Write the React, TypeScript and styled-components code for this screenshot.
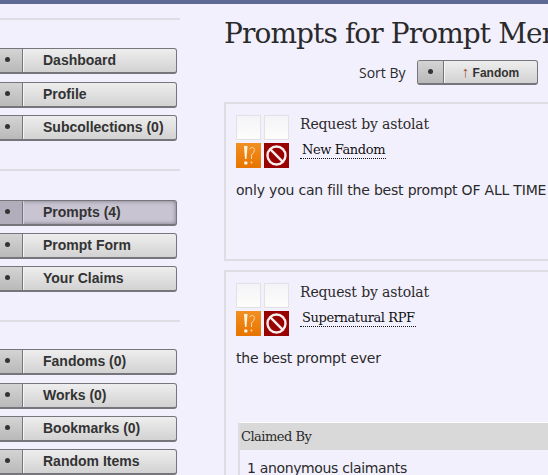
import React from "react";
import styled, { createGlobalStyle } from "styled-components";

const GlobalStyle = createGlobalStyle`
  html, body {
    margin: 0;
    padding: 0;
    height: 475px;
    overflow: hidden;
    background: #f3f0fe;
  }
`;

const navGroups = [
  { items: [{ label: "Dashboard" }, { label: "Profile" }, { label: "Subcollections (0)" }] },
  { items: [{ label: "Prompts (4)", current: true }, { label: "Prompt Form" }, { label: "Your Claims" }] },
  { items: [{ label: "Fandoms (0)" }, { label: "Works (0)" }, { label: "Bookmarks (0)" }, { label: "Random Items" }] },
];

const FlagIcon = () => (
  <svg width="25" height="25" viewBox="0 0 25 25">
    <defs>
      <linearGradient id="flag" x1="0" y1="0" x2="0" y2="1">
        <stop offset="0" stopColor="#f28f22" />
        <stop offset="1" stopColor="#e87400" />
      </linearGradient>
    </defs>
    <rect width="25" height="25" fill="url(#flag)" />
    <path d="M8 3 L11.5 3 L10.5 16 L9 16 Z" fill="#fdf3e4" />
    <circle cx="9.8" cy="20" r="1.8" fill="#fdf3e4" />
    <path d="M13.5 6 Q17 2.5 18.5 6.5 Q18.5 9.5 15.5 12 L15.5 16" fill="none" stroke="#f9d7aa" strokeWidth="1" />
    <circle cx="15.5" cy="19.5" r="1" fill="#f9d7aa" />
  </svg>
);

const BanIcon = () => (
  <svg width="25" height="25" viewBox="0 0 25 25">
    <rect width="25" height="25" fill="#990000" />
    <circle cx="12.5" cy="12.5" r="9" fill="none" stroke="#f4eeee" strokeWidth="2.4" />
    <path d="M6.2 6.2 L18.8 18.8" stroke="#f4eeee" strokeWidth="2.4" />
  </svg>
);

const App = () => {
  return (
    <Page>
      <GlobalStyle />
      <TopBar />
      <Columns>
        <Sidebar>
          {navGroups.map((group, i) => (
            <NavGroup key={i}>
              <Rule />
              <NavList>
                {group.items.map((item: any) => (
                  <NavButton key={item.label} $current={item.current}>
                    <NavDot $current={item.current}>
                      <i />
                    </NavDot>
                    <NavLabel $current={item.current}>{item.label}</NavLabel>
                  </NavButton>
                ))}
              </NavList>
            </NavGroup>
          ))}
        </Sidebar>
        <Main>
          <Title>Prompts for Prompt Meme</Title>
          <SortRow>
            <SortLabel>Sort By</SortLabel>
            <SortButton>
              <SortDot>
                <i />
              </SortDot>
              <SortText>
                <Arrow>↑</Arrow> Fandom
              </SortText>
            </SortButton>
          </SortRow>
          <Card>
            <CardHead>
              <Icons>
                <BlankIcon />
                <BlankIcon />
                <FlagIcon />
                <BanIcon />
              </Icons>
              <Heading>
                <Byline>Request by astolat</Byline>
                <Tag>New Fandom</Tag>
              </Heading>
            </CardHead>
            <Body>only you can fill the best prompt OF ALL TIME</Body>
          </Card>
          <Card>
            <CardHead>
              <Icons>
                <BlankIcon />
                <BlankIcon />
                <FlagIcon />
                <BanIcon />
              </Icons>
              <Heading>
                <Byline>Request by astolat</Byline>
                <Tag>Supernatural RPF</Tag>
              </Heading>
            </CardHead>
            <Body>the best prompt ever</Body>
            <Claims>
              <ClaimsHead>Claimed By</ClaimsHead>
              <ClaimsBody>1 anonymous claimants</ClaimsBody>
            </Claims>
          </Card>
        </Main>
      </Columns>
    </Page>
  );
};

export default App;

const Page = styled.div`
  width: 548px;
  height: 475px;
  overflow: hidden;
  background: #f3f0fe;
`;

const TopBar = styled.div`
  height: 4px;
  background: #5f6a94;
`;

const Columns = styled.div`
  display: flex;
  align-items: flex-start;
`;

const Sidebar = styled.div`
  width: 180px;
  flex: none;
  padding-top: 13.7px;
`;

const Rule = styled.div`
  height: 2px;
  background: #dfdde4;
  margin-bottom: 28.5px;
`;

const NavGroup = styled.div`
  margin-bottom: 28.2px;

  &:last-child ${Rule} {
    margin-bottom: 27px;
  }
`;

const NavList = styled.div`
  display: flex;
  flex-direction: column;
  gap: 7.33px;
`;

const NavButton = styled.div<{ $current?: boolean }>`
  display: flex;
  width: 181px;
  height: 26px;
  margin-left: -4px;
  box-sizing: border-box;
  border: 1px solid #77757c;
  border-bottom-width: 2px;
  border-radius: 3px;
  overflow: hidden;
  background: ${(p) => (p.$current ? "#c9c4d2" : "linear-gradient(#eeeeee, #d2d2d2)")};
  box-shadow: ${(p) => (p.$current ? "inset 0 0 4px #77747f" : "none")};
`;

const DotBase = styled.span`
  flex: none;
  display: flex;
  align-items: center;
  justify-content: center;
  box-sizing: border-box;
  border-right: 1px solid #77757c;

  i {
    display: block;
    width: 5px;
    height: 5px;
    border-radius: 50%;
    background: #333;
    margin-top: -2px;
  }
`;

const NavDot = styled(DotBase)<{ $current?: boolean }>`
  width: 26px;
  padding-right: 4px;
  background: ${(p) => (p.$current ? "#b2adbb" : "linear-gradient(#d4d4d4, #b9b9b9)")};
`;

const SortDot = styled(DotBase)`
  width: 26px;
  background: linear-gradient(#d4d4d4, #b9b9b9);
`;

const NavLabel = styled.span<{ $current?: boolean }>`
  padding-left: 19px;
  border-left: 1px solid ${(p) => (p.$current ? "#d8d4de" : "#f4f4f4")};
  font: bold 14px/22px "Liberation Sans", Arial, sans-serif;
  color: #333;
  white-space: nowrap;
`;

const Main = styled.div`
  margin-left: 44px;
  flex: 1;
  min-width: 0;
`;

const Title = styled.h2`
  margin: 12px 0 0;
  font: normal 28px/36px "DejaVu Serif", Georgia, serif;
  letter-spacing: -0.9px;
  color: #2a2a2a;
  white-space: nowrap;
`;

const SortRow = styled.div`
  display: flex;
  align-items: center;
  margin-top: 8px;
  padding-left: 135px;
  gap: 11px;
`;

const SortLabel = styled.span`
  font: 14px/20px "Open Sans", sans-serif;
  color: #2a2a2a;
`;

const SortButton = styled.div`
  display: flex;
  width: 121px;
  height: 25px;
  box-sizing: border-box;
  border: 1px solid #77757c;
  border-bottom-width: 2px;
  border-radius: 3px;
  overflow: hidden;
  background: linear-gradient(#eeeeee, #d2d2d2);
`;

const SortText = styled.span`
  flex: 1;
  text-align: center;
  border-left: 1px solid #f4f4f4;
  font: bold 12px/21px "Liberation Sans", Arial, sans-serif;
  color: #333;
`;

const Arrow = styled.span`
  color: #a0522d;
  font-size: 15px;
  font-weight: normal;
`;

const Card = styled.div`
  width: 360px;
  height: 159px;
  box-sizing: border-box;
  margin: 17px 0 9px;
  padding: 11px 10px;
  border: 2px solid #dfdde4;
  border-right: none;
  & + & {
    margin-top: 0;
    height: 240px;
  }
`;

const CardHead = styled.div`
  display: flex;
  gap: 11px;
`;

const Icons = styled.div`
  display: grid;
  grid-template-columns: 25px 25px;
  grid-auto-rows: 25px;
  gap: 3px;
  flex: none;
`;

const BlankIcon = styled.span`
  box-sizing: border-box;
  border: 1px solid #e3e1e6;
  background: linear-gradient(#f4f3f7, #fdfdfb);
`;

const Heading = styled.div`
  display: flex;
  flex-direction: column;
  align-items: flex-start;
  margin-top: -1px;
`;

const Byline = styled.div`
  font: 14px/20px "DejaVu Serif", Georgia, serif;
  letter-spacing: -0.15px;
  color: #2a2a2a;
  white-space: nowrap;
`;

const Tag = styled.a`
  margin-top: 8px;
  padding: 0 1px 0 2px;
  font: 13px/16px "DejaVu Serif", Georgia, serif;
  letter-spacing: -0.4px;
  color: #111;
  border-bottom: 1px dotted #111;
  white-space: nowrap;
`;

const Body = styled.p`
  margin: 12px 0 0;
  font: 14px/20px "DejaVu Sans", sans-serif;
  letter-spacing: -0.2px;
  color: #2a2a2a;
  white-space: nowrap;
`;

const Claims = styled.div`
  margin-top: 54px;
  margin-left: 2px;
  border-top: 1px solid #fff;
  border-left: 2px solid #dfdde4;
`;

const ClaimsHead = styled.div`
  height: 27px;
  background: #d9d9d9;
  padding-left: 1px;
  font: 13px/27px "DejaVu Serif", Georgia, serif;
  letter-spacing: -0.5px;
  color: #2a2a2a;
`;

const ClaimsBody = styled.div`
  padding: 8px 7px;
  font: 14px/20px "DejaVu Sans", sans-serif;
  letter-spacing: -0.35px;
  color: #2a2a2a;
`;
